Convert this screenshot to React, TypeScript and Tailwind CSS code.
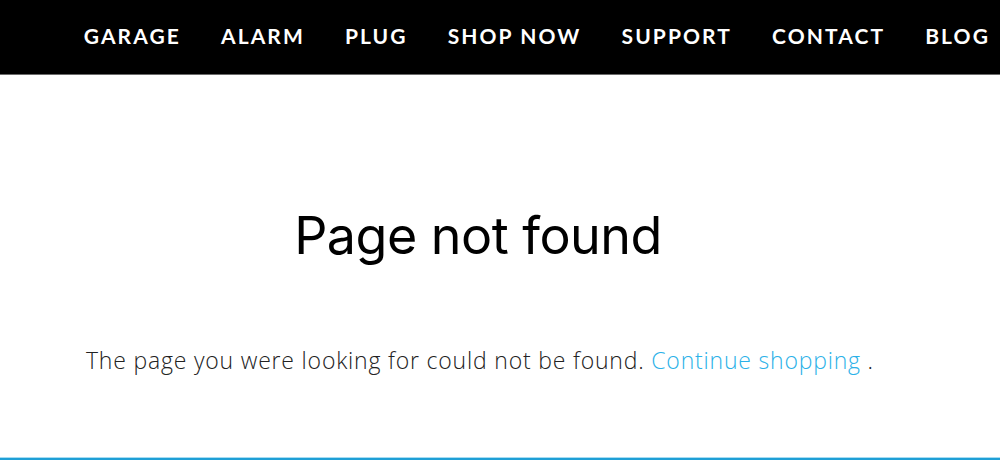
const navItems = ['Garage', 'Alarm', 'Plug', 'Shop Now', 'Support', 'Contact', 'Blog'];

const App = () => {
  return (
    <div className="w-full h-[460px] bg-white flex flex-col overflow-hidden">
      <header className="h-[75px] bg-black border-b border-[#6b6b6b] flex items-center justify-end pr-[10px]">
        <nav className="flex gap-[40px] pb-[2px]">
          {navItems.map(item => (
            <a key={item} href="#" className="text-white uppercase font-bold text-[21px] tracking-[0.1em] font-['Lato',sans-serif]">
              {item}
            </a>
          ))}
        </nav>
      </header>

      <main className="flex-1 flex flex-col">
        <h1 className="mt-[135px] pr-[44px] text-center text-[52px] leading-none text-black font-['Inter',sans-serif] tracking-[-0.01em]">
          Page not found
        </h1>
        <p className="mt-[81px] pl-[86px] text-[23px] font-light tracking-[0.035em] text-[#222] font-['Open_Sans',sans-serif]">
          The page you were looking for could not be found.{' '}
          <a href="#" className="text-[#2bb1e8]">Continue shopping</a> .
        </p>
      </main>

      <footer className="h-[3px] border-t border-[#a6dcf2] bg-[#1f9fd6]"></footer>
    </div>
  );
};

export default App;
